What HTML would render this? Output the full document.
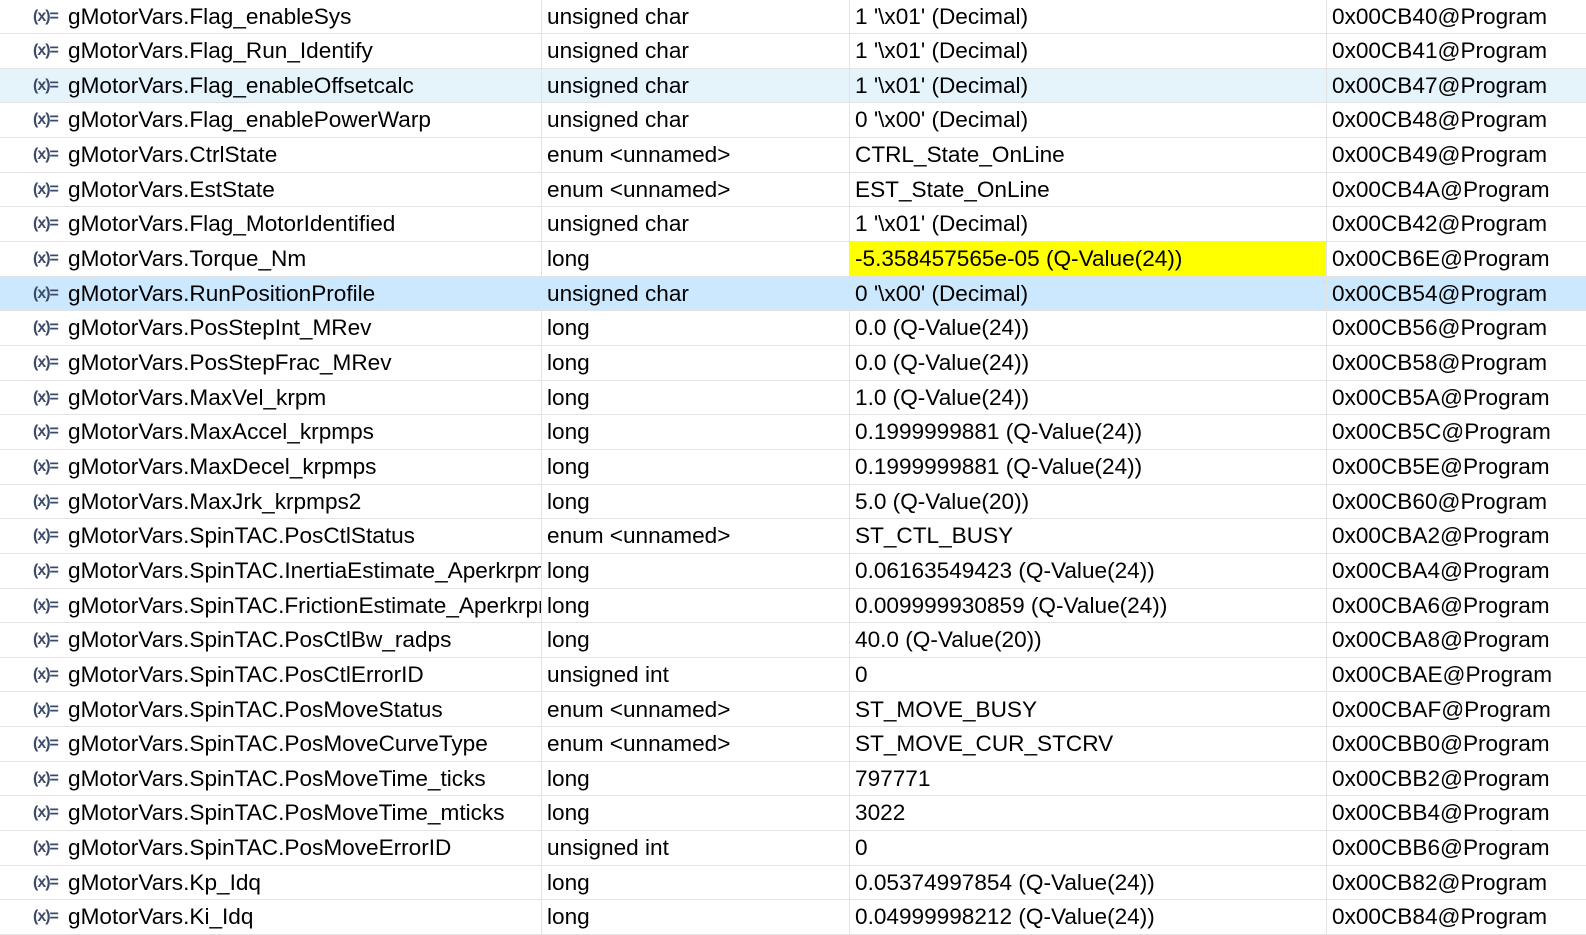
<!DOCTYPE html>
<html><head><style>
body{margin:0;width:1586px;height:919px;overflow:hidden;background:#fff;font-family:"Liberation Sans",sans-serif;}
.r{position:absolute;left:0;width:1586px;height:34.65px;border-bottom:1px solid #e3e3e3;box-sizing:border-box;font-size:22.6px;color:#000;}
.c{position:absolute;top:0;height:100%;line-height:34px;white-space:nowrap;overflow:hidden;box-sizing:border-box;border-right:1px solid #e3e3e3;}
.c1{left:0;width:542px;padding-left:68px}
.c2{left:542px;width:308px;padding-left:5px}
.c3{left:850px;width:477px;padding-left:5px}
.c4{left:1327px;width:259px;padding-left:5px;border-right:none}
.ic{position:absolute;left:33px;top:0;font-size:16px;font-weight:bold;color:#3c4a6a;letter-spacing:-1px}
.s1{background:#e5f3fb}.s2{background:#cce8ff}
.y{background:#ffff00}
</style></head><body>
<div id="g"></div>
<script>
var d=[
["gMotorVars.Flag_enableSys","unsigned char","1 '\\x01' (Decimal)","0x00CB40@Program"],
["gMotorVars.Flag_Run_Identify","unsigned char","1 '\\x01' (Decimal)","0x00CB41@Program"],
["gMotorVars.Flag_enableOffsetcalc","unsigned char","1 '\\x01' (Decimal)","0x00CB47@Program"],
["gMotorVars.Flag_enablePowerWarp","unsigned char","0 '\\x00' (Decimal)","0x00CB48@Program"],
["gMotorVars.CtrlState","enum &lt;unnamed&gt;","CTRL_State_OnLine","0x00CB49@Program"],
["gMotorVars.EstState","enum &lt;unnamed&gt;","EST_State_OnLine","0x00CB4A@Program"],
["gMotorVars.Flag_MotorIdentified","unsigned char","1 '\\x01' (Decimal)","0x00CB42@Program"],
["gMotorVars.Torque_Nm","long","-5.358457565e-05 (Q-Value(24))","0x00CB6E@Program"],
["gMotorVars.RunPositionProfile","unsigned char","0 '\\x00' (Decimal)","0x00CB54@Program"],
["gMotorVars.PosStepInt_MRev","long","0.0 (Q-Value(24))","0x00CB56@Program"],
["gMotorVars.PosStepFrac_MRev","long","0.0 (Q-Value(24))","0x00CB58@Program"],
["gMotorVars.MaxVel_krpm","long","1.0 (Q-Value(24))","0x00CB5A@Program"],
["gMotorVars.MaxAccel_krpmps","long","0.1999999881 (Q-Value(24))","0x00CB5C@Program"],
["gMotorVars.MaxDecel_krpmps","long","0.1999999881 (Q-Value(24))","0x00CB5E@Program"],
["gMotorVars.MaxJrk_krpmps2","long","5.0 (Q-Value(20))","0x00CB60@Program"],
["gMotorVars.SpinTAC.PosCtlStatus","enum &lt;unnamed&gt;","ST_CTL_BUSY","0x00CBA2@Program"],
["gMotorVars.SpinTAC.InertiaEstimate_Aperkrpm","long","0.06163549423 (Q-Value(24))","0x00CBA4@Program"],
["gMotorVars.SpinTAC.FrictionEstimate_Aperkrpm","long","0.009999930859 (Q-Value(24))","0x00CBA6@Program"],
["gMotorVars.SpinTAC.PosCtlBw_radps","long","40.0 (Q-Value(20))","0x00CBA8@Program"],
["gMotorVars.SpinTAC.PosCtlErrorID","unsigned int","0","0x00CBAE@Program"],
["gMotorVars.SpinTAC.PosMoveStatus","enum &lt;unnamed&gt;","ST_MOVE_BUSY","0x00CBAF@Program"],
["gMotorVars.SpinTAC.PosMoveCurveType","enum &lt;unnamed&gt;","ST_MOVE_CUR_STCRV","0x00CBB0@Program"],
["gMotorVars.SpinTAC.PosMoveTime_ticks","long","797771","0x00CBB2@Program"],
["gMotorVars.SpinTAC.PosMoveTime_mticks","long","3022","0x00CBB4@Program"],
["gMotorVars.SpinTAC.PosMoveErrorID","unsigned int","0","0x00CBB6@Program"],
["gMotorVars.Kp_Idq","long","0.05374997854 (Q-Value(24))","0x00CB82@Program"],
["gMotorVars.Ki_Idq","long","0.04999998212 (Q-Value(24))","0x00CB84@Program"]];
var h="";
d.forEach(function(r,i){
var cls=i==2?" s1":i==8?" s2":"";
h+='<div class="r'+cls+'" style="top:'+(i*34.65-0.5)+'px"><div class="c c1"><span class="ic">(x)=</span>'+r[0]+'</div><div class="c c2">'+r[1]+'</div><div class="c c3'+(i==7?' y':'')+'">'+r[2]+'</div><div class="c c4">'+r[3]+'</div></div>';
});
document.getElementById("g").innerHTML=h;
</script>
</body></html>
